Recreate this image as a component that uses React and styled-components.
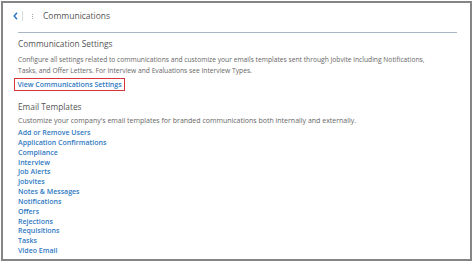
import styled, { createGlobalStyle } from 'styled-components';

const Global = createGlobalStyle`
    body {
        margin: 0;
        background: #ffffff;
        font-family: "Open Sans", "Liberation Sans", sans-serif;
    }
`

const Frame = styled.div`
    box-sizing: border-box;
    margin: 1px 0 0 1px;
    width: 471px;
    height: 260px;
    border: 2px solid #858585;
    background: #ffffff;
    display: flex;
    flex-direction: column;
`

const Header = styled.div`
    box-sizing: border-box;
    display: flex;
    align-items: center;
    height: 29px;
    padding: 0 0 3px 10px;
`

const Back = styled.svg`
    width: 5px;
    height: 8px;
    margin-right: 4px;
`

const Sep = styled.span`
    width: 1px;
    height: 10px;
    background: #dadada;
    margin-right: 9px;
`

const Dots = styled.span`
    width: 1px;
    height: 5px;
    border-left: 1px dotted #a8a8a8;
    margin-right: 9px;
`

const PageTitle = styled.h1`
    margin: 0;
    font-size: 8.5px;
    font-weight: 400;
    color: #555555;
    line-height: 12px;
`

const Divider = styled.div`
    height: 1px;
    background: #a9b6c4;
    margin: 0 13px 0 15px;
`

const Content = styled.div`
    padding: 0 10px 0 15px;
    display: flex;
    flex-direction: column;
`

const SectionTitle = styled.h2`
    margin: ${p => p.$top || 0}px 0 0 0;
    font-size: 8.3px;
    font-weight: 400;
    color: #555555;
    line-height: 12px;
`

const Text = styled.p`
    margin: ${p => p.$top || 0}px 0 0 0;
    font-size: ${p => p.$size || 7}px;
    line-height: 11px;
    color: #676767;
`

const Boxed = styled.div`
    align-self: flex-start;
    margin: 2px 0 0 -4px;
    padding: 0 2.5px;
    border: 1.5px solid #d6343c;
    line-height: 11px;
`

const LinkList = styled.div`
    display: flex;
    flex-direction: column;
    margin-top: ${p => p.$top || 0}px;
`

const Item = styled.a`
    display: block;
    font-size: 7px;
    font-weight: 600;
    color: #2f79c2;
    line-height: ${p => p.$lh || 9.83}px;
    text-decoration: none;
`

const templates = [
    'Add or Remove Users',
    'Application Confirmations',
    'Compliance',
    'Interview',
    'Job Alerts',
    'Jobvites',
    'Notes & Messages',
    'Notifications',
    'Offers',
    'Rejections',
    'Requisitions',
    'Tasks',
    'Video Email',
]

function App() {
    return (
        <>
            <Global />
            <Frame>
                <Header>
                    <Back viewBox="0 0 5 8">
                        <path d="M4 0.8 L1.2 4 L4 7.2" fill="none" stroke="#3a7cc4" strokeWidth="1.6" />
                    </Back>
                    <Sep />
                    <Dots />
                    <PageTitle>Communications</PageTitle>
                </Header>
                <Divider />
                <Content>
                    <SectionTitle $top={5}>Communication Settings</SectionTitle>
                    <Text $top={4} $size={6.7}>
                        Configure all settings related to communications and customize your emails templates sent through Jobvite including Notifications,
                        <br />
                        Tasks, and Offer Letters. For Interview and Evaluations see Interview Types.
                    </Text>
                    <Boxed>
                        <Item href="#" $lh={11}>View Communications Settings</Item>
                    </Boxed>
                    <SectionTitle $top={10}>Email Templates</SectionTitle>
                    <Text $top={1.5}>
                        Customize your company's email templates for branded communications both internally and externally.
                    </Text>
                    <LinkList $top={2.6}>
                        {templates.map(t => (
                            <Item key={t} href="#">{t}</Item>
                        ))}
                    </LinkList>
                </Content>
            </Frame>
        </>
    )
}

export default App;
